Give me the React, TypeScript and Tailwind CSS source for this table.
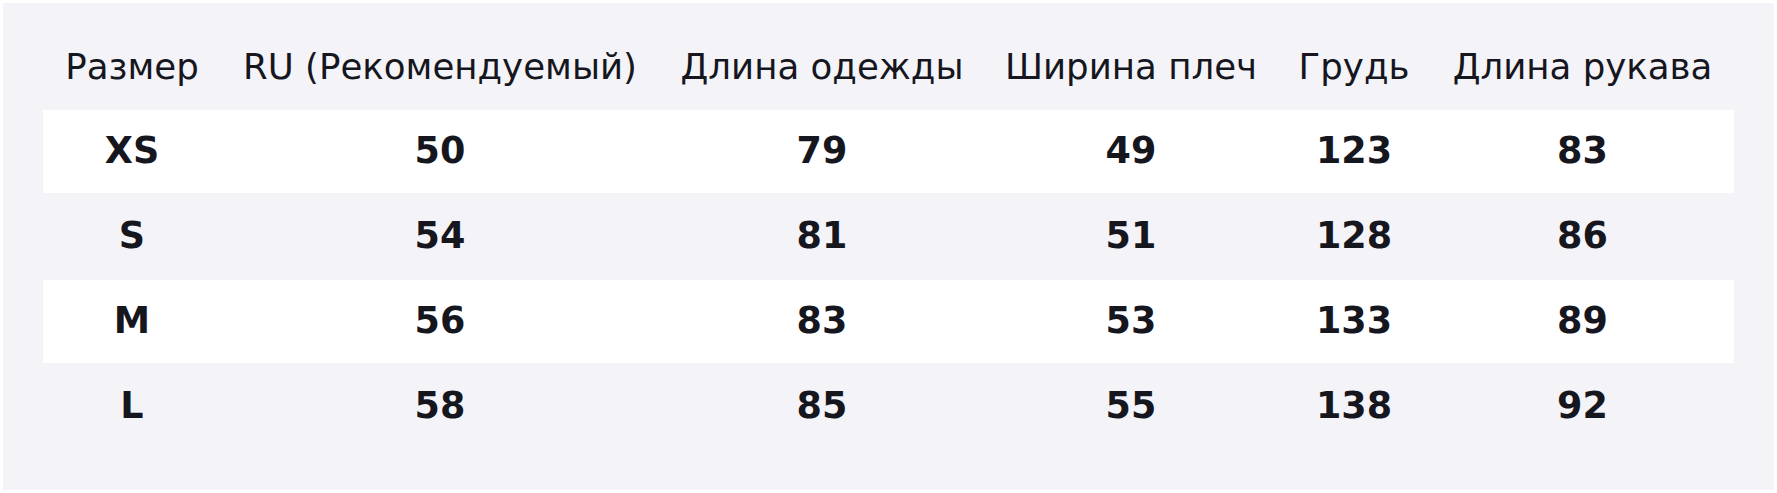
import React from "react";

const headers = ["Размер", "RU (Рекомендуемый)", "Длина одежды", "Ширина плеч", "Грудь", "Длина рукава"];

const rows: string[][] = [
  ["XS", "50", "79", "49", "123", "83"],
  ["S", "54", "81", "51", "128", "86"],
  ["M", "56", "83", "53", "133", "89"],
  ["L", "58", "85", "55", "138", "92"],
];

const grid = "grid grid-cols-[178px_438px_326px_292px_154px_303px] h-[83px] items-center text-center";

export default function App() {
  return (
    <div className="w-[1777px] h-[493px] bg-white p-[3px] font-['DejaVu_Sans',sans-serif] text-[#16161e]">
      <div className="h-full bg-[#f4f4f8] px-[40px] pt-[22px]">
        <div className="flex flex-col gap-[2px]">
          <div className={grid}>
            {headers.map((h) => (
              <div key={h} className="text-[35.6px] leading-none whitespace-nowrap">
                {h}
              </div>
            ))}
          </div>
          {rows.map((r, i) => (
            <div key={r[0]} className={`${grid} ${i % 2 === 0 ? "bg-white" : "bg-transparent"}`}>
              {r.map((c, j) => (
                <div key={j} className="text-[36.5px] font-bold leading-none">
                  {c}
                </div>
              ))}
            </div>
          ))}
        </div>
      </div>
    </div>
  );
}
